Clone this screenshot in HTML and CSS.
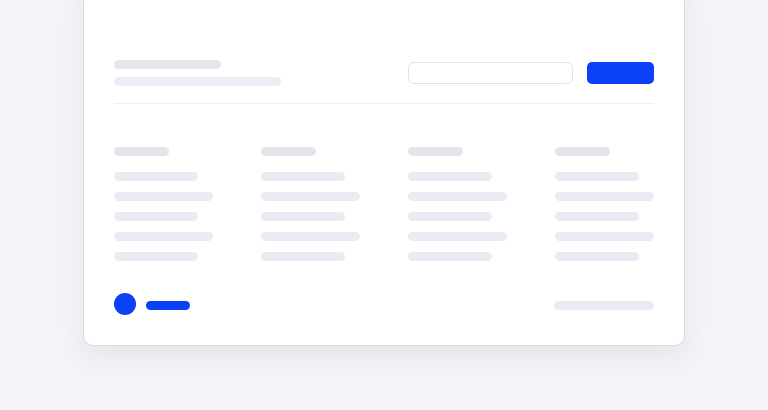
FILE: index.html
```html
<!DOCTYPE html>
<html lang="en">
<head>
<meta charset="utf-8">
<title>Skeleton</title>
<link rel="stylesheet" href="styles.css">
</head>
<body>
<div class="card">
  <div class="header">
    <div class="title-lines">
      <div class="bar bar-title"></div>
      <div class="bar bar-sub"></div>
    </div>
    <div class="actions">
      <div class="input"></div>
      <div class="button"></div>
    </div>
  </div>
  <div class="divider"></div>
  <div class="columns">
    <div class="col">
      <div class="bar col-head"></div>
      <div class="bar short"></div>
      <div class="bar long"></div>
      <div class="bar short"></div>
      <div class="bar long"></div>
      <div class="bar short"></div>
    </div>
    <div class="col">
      <div class="bar col-head"></div>
      <div class="bar short"></div>
      <div class="bar long"></div>
      <div class="bar short"></div>
      <div class="bar long"></div>
      <div class="bar short"></div>
    </div>
    <div class="col">
      <div class="bar col-head"></div>
      <div class="bar short"></div>
      <div class="bar long"></div>
      <div class="bar short"></div>
      <div class="bar long"></div>
      <div class="bar short"></div>
    </div>
    <div class="col">
      <div class="bar col-head"></div>
      <div class="bar short"></div>
      <div class="bar long"></div>
      <div class="bar short"></div>
      <div class="bar long"></div>
      <div class="bar short"></div>
    </div>
  </div>
  <div class="footer">
    <div class="brand">
      <div class="dot"></div>
      <div class="pill"></div>
    </div>
    <div class="bar foot-bar"></div>
  </div>
</div>
</body>
</html>
```

FILE: styles.css
```css
* { box-sizing: border-box; }
html, body { margin: 0; padding: 0; }
body {
  background: #f3f4f7;
  font-family: "Liberation Sans", Arial, sans-serif;
  height: 410px;
  overflow: hidden;
}
.card {
  width: 602px;
  margin: -20px auto 0;
  background: #ffffff;
  border: 1px solid #d8dbe1;
  border-radius: 10px;
  padding: 79px 30px 30px;
  box-shadow: 0 10px 28px rgba(30, 40, 70, 0.07);
}
.bar {
  height: 9px;
  border-radius: 5px;
  background: #e9ecf2;
}
.header {
  display: flex;
  align-items: center;
  justify-content: space-between;
}
.title-lines {
  display: flex;
  flex-direction: column;
  gap: 8px;
}
.bar-title { width: 107px; background: #e3e6eb; }
.bar-sub { width: 167px; background: #eaedf3; }
.actions {
  display: flex;
  align-items: center;
  gap: 14px;
}
.input {
  width: 165px;
  height: 22px;
  border: 1.5px solid #dfe2e7;
  border-radius: 6px;
  background: #fff;
}
.button {
  width: 67px;
  height: 22px;
  border-radius: 5px;
  background: #0b41f6;
}
.divider {
  height: 1px;
  background: #eceef2;
  margin-top: 17px;
}
.columns {
  display: grid;
  grid-template-columns: repeat(4, 99px);
  column-gap: 48px;
  margin-top: 43px;
}
.col {
  display: flex;
  flex-direction: column;
  gap: 11px;
}
.col-head {
  width: 55px;
  background: #e2e5ea;
  margin-bottom: 5px;
}
.short { width: 84px; }
.long { width: 99px; }
.footer {
  display: flex;
  align-items: center;
  justify-content: space-between;
  margin-top: 32px;
}
.brand {
  display: flex;
  align-items: center;
  gap: 10px;
}
.dot {
  width: 22px;
  height: 22px;
  border-radius: 50%;
  background: #0b41f6;
}
.pill {
  width: 44px;
  height: 9px;
  border-radius: 5px;
  background: #0b41f6;
  margin-top: 2px;
}
.foot-bar { width: 100px; margin-top: 2px; }
```
